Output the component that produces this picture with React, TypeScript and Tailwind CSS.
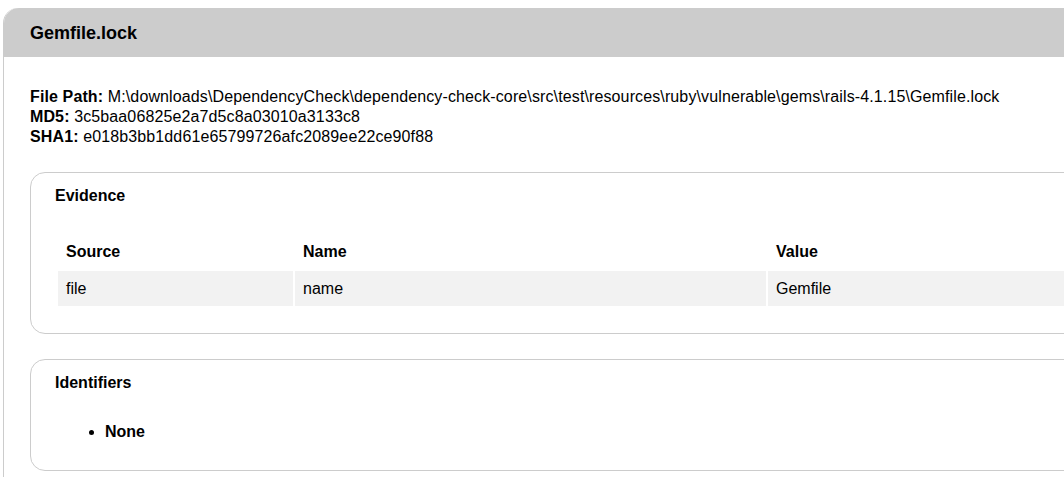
import React from 'react';

const rows = [{ source: 'file', name: 'name', value: 'Gemfile' }];

const Card: React.FC<{ title: string; className?: string; children: React.ReactNode }> = ({ title, className, children }) => {
  return (
    <div className={`rounded-[15px] border border-[#cccccc] px-[24px] pt-[13px] ${className ?? ''}`}>
      <h4 className="font-bold text-[16px] leading-5">{title}</h4>
      {children}
    </div>
  );
};

export default function App() {
  return (
    <div className="w-screen h-screen overflow-hidden bg-white text-black" style={{ fontFamily: '"Liberation Sans", Arial, sans-serif' }}>
      <div className="ml-[3px] mt-[8px] w-[1240px] border-l border-[#cccccc] rounded-tl-[15px]">
        <div className="h-[49px] bg-[#cccccc] rounded-tl-[15px] pl-[26px] pt-[15px]">
          <h3 className="font-bold text-[18px] leading-[21px]">Gemfile.lock</h3>
        </div>

        <div className="pl-[26px] pt-[30px] pb-[20px]">
          <div className="text-[16px] leading-5 tracking-[0.12px]">
            <div><b>File Path:</b> M:\downloads\DependencyCheck\dependency-check-core\src\test\resources\ruby\vulnerable\gems\rails-4.1.15\Gemfile.lock</div>
            <div><b>MD5:</b> 3c5baa06825e2a7d5c8a03010a3133c8</div>
            <div><b>SHA1:</b> e018b3bb1dd61e65799726afc2089ee22ce90f88</div>
          </div>

          <Card title="Evidence" className="mt-[25px] pb-[25px]">
            <table className="mt-[26px] ml-[1px] w-full border-separate border-spacing-[2px] text-[16px] leading-[19px]">
              <thead>
                <tr>
                  <th className="w-[235px] px-2 py-2 text-left font-bold">Source</th>
                  <th className="w-[471px] px-2 py-2 text-left font-bold">Name</th>
                  <th className="px-2 py-2 text-left font-bold">Value</th>
                </tr>
              </thead>
              <tbody>
                {rows.map((r) => (
                  <tr key={r.name} className="bg-[#f2f2f2]">
                    <td className="px-2 py-2">{r.source}</td>
                    <td className="px-2 py-2">{r.name}</td>
                    <td className="px-2 py-2">{r.value}</td>
                  </tr>
                ))}
              </tbody>
            </table>
          </Card>

          <Card title="Identifiers" className="mt-[25px] pb-[28px]">
            <ul className="mt-[29px] list-disc pl-[50px] text-[16px] leading-5">
              <li className="font-bold">None</li>
            </ul>
          </Card>
        </div>
      </div>
    </div>
  );
}
